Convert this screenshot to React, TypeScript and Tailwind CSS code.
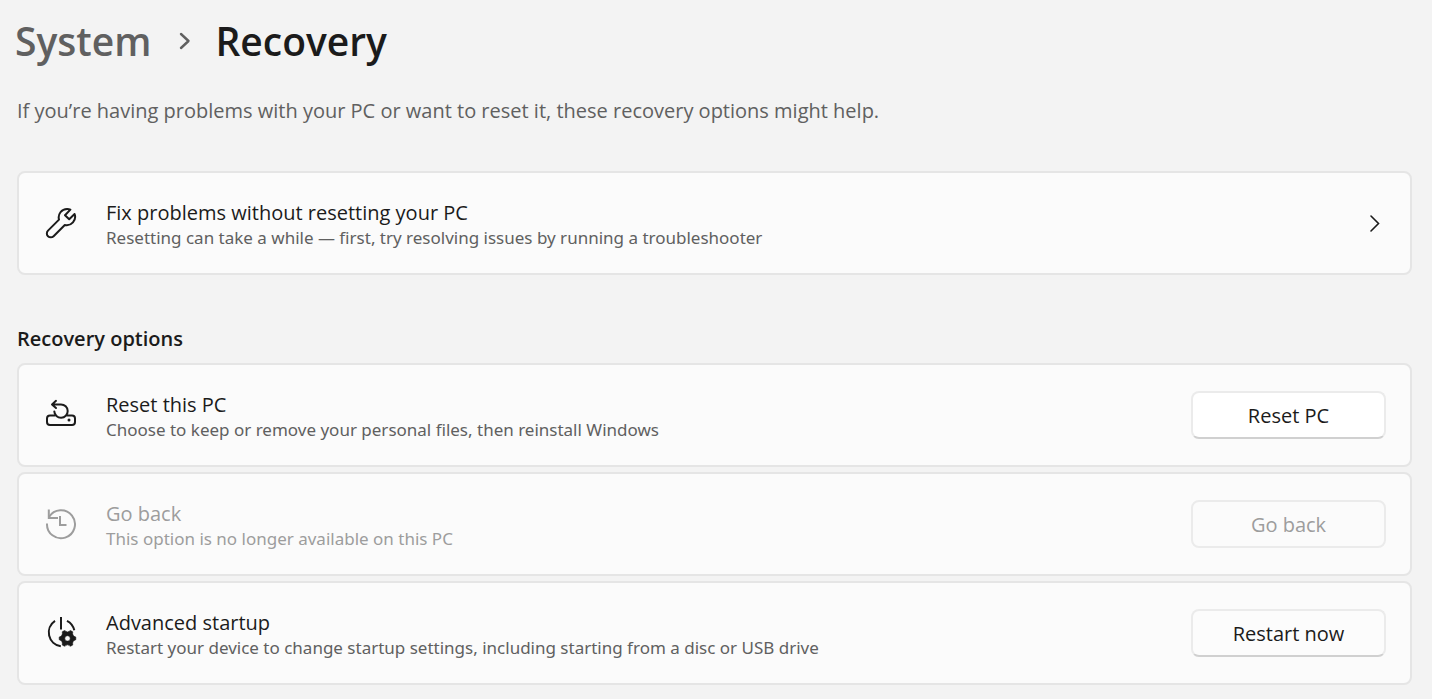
import type { ReactNode } from 'react';

function WrenchIcon() {
  return (
    <svg width="32" height="32" viewBox="0 0 32 32" fill="none" stroke="currentColor" strokeWidth="2" strokeLinejoin="round" aria-hidden="true">
      <path d="M22.200 2A8.400 8.400 0 0 0 14 12.600L3 23.600a3.900 3.900 0 0 0 5.600 5.600L19.800 18A8.400 8.400 0 0 0 29.600 7L24.200 12.200L20 8.200L25.400 2.600A8.400 8.400 0 0 0 22.200 2Z" />
    </svg>
  );
}

function ResetIcon() {
  return (
    <svg width="32" height="32" viewBox="0 0 32 32" fill="none" stroke="currentColor" strokeWidth="2" strokeLinecap="round" strokeLinejoin="round" aria-hidden="true">
      <path d="M9.600 16.500H5a3 3 0 0 0-3 3V23a3 3 0 0 0 3 3h22a3 3 0 0 0 3-3v-3.500a3 3 0 0 0-3-3h-4.600" />
      <path d="M11 1.800L7 5.400L11 9M7.400 5.400H16a6.700 6.700 0 1 1-6.700 7" />
      <circle cx="24" cy="21" r="1.500" fill="currentColor" stroke="none" />
    </svg>
  );
}

function HistoryIcon() {
  return (
    <svg width="32" height="32" viewBox="0 0 32 32" fill="none" stroke="currentColor" strokeWidth="2" aria-hidden="true">
      <path d="M2 15.500A14 14 0 1 0 4 9" />
      <path d="M3.800 1.500V10H13" />
      <path d="M15 8V17H21.500" />
    </svg>
  );
}

function StartupIcon() {
  return (
    <svg width="32" height="32" viewBox="0 0 32 32" fill="none" stroke="currentColor" strokeWidth="2" aria-hidden="true">
      <path d="M16 0V12.600" />
      <path d="M10 3.800A14 14 0 0 0 15.800 29.300M22 3.800A14 14 0 0 1 29.300 13.300" />
      <path
        transform="translate(22.5 21.4)"
        fill="currentColor"
        stroke="currentColor"
        strokeWidth="0.600"
        strokeLinejoin="round"
        fillRule="evenodd"
        d="M8.300 1.300Q4.330 2.500 5.280 6.540L3.020 7.840Q0 5-3.020 7.840L-5.280 6.540Q-4.330 2.500-8.300 1.300V-1.300Q-4.330-2.500-5.280-6.540L-3.020-7.840Q0-5 3.020-7.840L5.280-6.540Q4.330-2.500 8.300-1.300ZM0-2.700a2.700 2.700 0 1 0 0 5.400a2.700 2.700 0 0 0 0-5.400Z"
      />
    </svg>
  );
}

type RowProps = {
  icon: ReactNode;
  title: string;
  detail: string;
  disabled?: boolean;
  children: ReactNode;
};

function Row({ icon, title, detail, disabled = false, children }: RowProps) {
  return (
    <div className="flex min-h-[104px] items-center rounded-lg border-2 border-[#e5e5e5] bg-[#fbfbfb] pr-6 pl-[26px]">
      <span className={disabled ? 'text-[#9d9d9d]' : 'text-[#1b1b1b]'}>{icon}</span>
      <div className="ml-[29px] flex-1 pt-1 text-left">
        <h3 className={`text-[20px] leading-[26px] ${disabled ? 'text-[#9d9d9d]' : 'text-[#1b1b1b]'}`}>{title}</h3>
        <p className={`font-['Noto_Sans',sans-serif] text-[17px] leading-6 ${disabled ? 'text-[#9d9d9d]' : 'text-[#606060]'}`}>{detail}</p>
      </div>
      {children}
    </div>
  );
}

const buttonBase = 'h-12 w-[195px] rounded-lg border-2 border-[#ebebeb] pt-px text-[20px]';

export default function App() {
  return (
    <main className="min-h-screen bg-[#f3f3f3] pt-[15px] pr-5 pb-4 pl-[17px] font-['Open_Sans','Noto_Sans',sans-serif] text-[#1b1b1b]">
      <nav aria-label="Breadcrumb" className="-ml-0.5 flex items-center gap-[22px] text-[39px] leading-[52px] font-semibold">
        <a href="#system" className="text-[#606060]">System</a>
        <svg width="20" height="20" viewBox="0 0 20 20" fill="none" stroke="#606060" strokeWidth="2.400" strokeLinecap="round" strokeLinejoin="round" aria-hidden="true">
          <path d="M8 3L15.500 10L8 17" />
        </svg>
        <h1>Recovery</h1>
      </nav>
      <p className="mt-[30px] text-[20px] leading-7 text-[#606060]">
        If you’re having problems with your PC or want to reset it, these recovery options might help.
      </p>
      <a href="#troubleshoot" className="mt-[46px] block">
        <Row icon={<WrenchIcon />} title="Fix problems without resetting your PC" detail="Resetting can take a while — first, try resolving issues by running a troubleshooter">
          <svg width="20" height="20" viewBox="0 0 20 20" fill="none" stroke="currentColor" strokeWidth="1.600" strokeLinecap="round" aria-hidden="true">
            <path d="M5 3L12.500 10.500L5 18" />
          </svg>
        </Row>
      </a>
      <h2 className="mt-[50px] text-[20px] leading-7 font-semibold">Recovery options</h2>
      <section className="mt-[10px] flex flex-col gap-[5px]">
        <Row icon={<ResetIcon />} title="Reset this PC" detail="Choose to keep or remove your personal files, then reinstall Windows">
          <button type="button" className={`${buttonBase} border-b-[#d0d0d0] bg-white`}>Reset PC</button>
        </Row>
        <Row icon={<HistoryIcon />} title="Go back" detail="This option is no longer available on this PC" disabled>
          <button type="button" disabled className={`${buttonBase} bg-[#fbfbfb] text-[#9d9d9d]`}>Go back</button>
        </Row>
        <Row icon={<StartupIcon />} title="Advanced startup" detail="Restart your device to change startup settings, including starting from a disc or USB drive">
          <button type="button" className={`${buttonBase} border-b-[#d0d0d0] bg-[#fcfcfc]`}>Restart now</button>
        </Row>
      </section>
    </main>
  );
}
